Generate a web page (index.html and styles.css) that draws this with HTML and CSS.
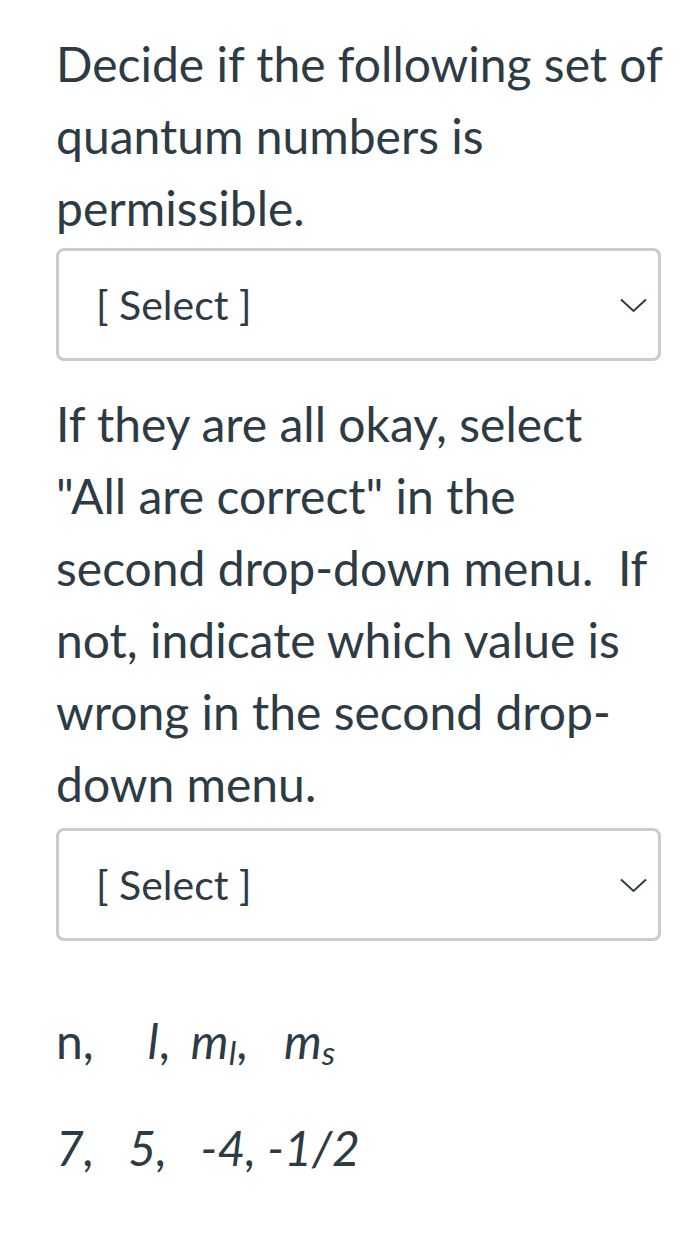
FILE: index.html
```html
<!DOCTYPE html>
<html lang="en">
<head>
<meta charset="utf-8">
<title>Quantum numbers question</title>
<link rel="stylesheet" href="styles.css">
</head>
<body>
<div class="question">
  <p class="text">Decide if the following set of quantum numbers is permissible.</p>
  <div class="select select-first">
    <span class="select-label">[ Select ]</span>
    <svg class="chevron" width="27" height="15" viewBox="0 0 27 15"><path d="M1 1.5 L13.5 13 L26 1.5" fill="none" stroke="#2d3b45" stroke-width="2"/></svg>
  </div>
  <p class="text text-second">If they are all okay, select "All are correct" in the second drop-down menu.&nbsp; If not, indicate which value is wrong in the second drop-down menu.</p>
  <div class="select select-second">
    <span class="select-label">[ Select ]</span>
    <svg class="chevron" width="27" height="15" viewBox="0 0 27 15"><path d="M1 1.5 L13.5 13 L26 1.5" fill="none" stroke="#2d3b45" stroke-width="2"/></svg>
  </div>
  <p class="text row row-labels">n,&nbsp;&nbsp;&nbsp; <i class="ell">l</i>, <i class="ml">m<sub>l</sub></i>,&nbsp;&nbsp; <i>m<sub>s</sub></i></p>
  <p class="text row row-values"><i>7,&nbsp;&nbsp; 5,&nbsp;&nbsp; -4, -1/2</i></p>
</div>
</body>
</html>
```
FILE: styles.css
```css
html, body {
  margin: 0;
  padding: 0;
  background: #ffffff;
}

.question {
  padding: 28px 0 40px 56px;
  font-family: Lato, "Noto Sans", sans-serif;
  color: #2d3b45;
}

.text {
  margin: 0;
  width: 612px;
  font-size: 48px;
  line-height: 72px;
}

.text-second {
  margin-top: 27px;
  width: 600px;
}

.select {
  box-sizing: border-box;
  width: 605px;
  height: 113px;
  border: 3px solid #cbcbcb;
  border-radius: 8px;
  display: flex;
  align-items: center;
  justify-content: space-between;
  padding: 0 11px 0 37px;
  background: #fff;
}

.select-first {
  margin-top: 4px;
}

.select-second {
  margin-top: 8px;
}

.select-label {
  font-size: 41px;
  line-height: 1;
  color: #2d3b45;
}

.chevron {
  display: block;
  margin-top: 1px;
}

.row i {
  font-style: italic;
}

.row .ell {
  margin-left: 5px;
}

.row .ml {
  margin-left: 9px;
}

.row sub {
  font-size: 0.7em;
  line-height: 0;
  vertical-align: -6px;
}

.row-labels {
  margin-top: 64px;
}

.row-values {
  margin-top: 35px;
}
```
